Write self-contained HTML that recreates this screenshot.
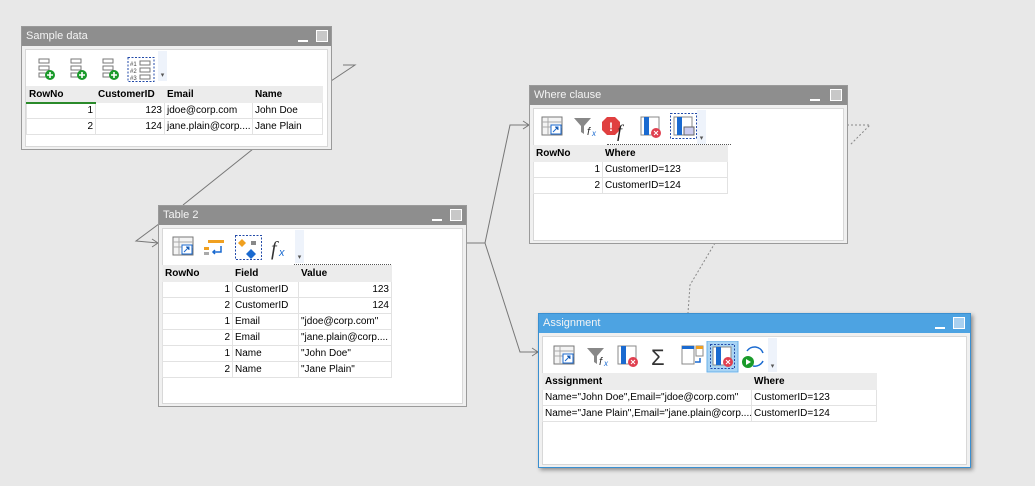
<!DOCTYPE html>
<html><head><style>
*{margin:0;padding:0;box-sizing:border-box}
body{width:1035px;height:486px;background:#e8e8e8;position:relative;overflow:hidden;font-family:"Liberation Sans",sans-serif;font-size:10px;color:#000}
.win{position:absolute;background:#f0f0f0;border:1px solid #9a9a9a}
.tb{height:19px;background:#8e8e8e;color:#f4f4f4;font-size:11px;line-height:19px;padding-left:4px;position:relative}
.tb .mn{position:absolute;top:13px;width:10px;height:2px;background:#fff}
.tb .mx{position:absolute;top:3px;width:12px;height:12px;border:1px solid #fff;background:#c8c8c8}
.body{position:absolute;background:#fff;border:1px solid #d8d8d8}
table{position:absolute;border-collapse:collapse;table-layout:fixed}
td,th{height:16px;border:1px solid #e2e2e2;padding:0 2px;white-space:nowrap;overflow:hidden;font-size:10px}
th{background:#ececec;font-weight:bold;text-align:left;border-color:#ececec}
td.r{text-align:right}
.ic{position:absolute}
.more{position:absolute;width:9px;background:#eef3fb;font-size:7px;color:#555;text-align:center}
</style></head><body>
<svg width="1035" height="486" style="position:absolute;left:0;top:0">
<g stroke="#777" fill="none" stroke-width="1">
<polyline points="331,81 355,65 343,65"/>
<line x1="253" y1="149" x2="183" y2="205"/>
<polyline points="175,212 136,241 158,243"/>
<polyline points="466,243 485,243 510,125 529,125"/>
<polyline points="485,243 520,352 538,352"/>
<path d="M152,239 L158,243 L152,247 M523,121 L529,125 L523,129 M532,348 L538,352 L532,356"/>
</g>
<g stroke="#888" fill="none" stroke-dasharray="2,2">
<polyline points="847,125 870,125 850,145"/>
<polyline points="715,243 690,285 688,313"/>
</g>
</svg>

<!-- Sample data -->
<div class="win" style="left:21px;top:26px;width:311px;height:124px">
<div class="tb">Sample data<span class="mn" style="left:276px"></span><span class="mx" style="left:294px"></span></div>
<div class="body" style="left:3px;top:22px;width:303px;height:98px"></div>
<svg class="ic" style="left:14px;top:30px" width="140" height="26">
<g fill="#fff" stroke="#777"><rect x="3" y="2" width="10" height="4"/><rect x="3" y="9" width="10" height="4"/><rect x="3" y="16" width="10" height="4"/>
<rect x="35" y="2" width="10" height="4"/><rect x="35" y="9" width="10" height="4"/><rect x="35" y="16" width="10" height="4"/>
<rect x="67" y="2" width="10" height="4"/><rect x="67" y="9" width="10" height="4"/><rect x="67" y="16" width="10" height="4"/></g>
<g fill="#1a9a2a"><circle cx="14" cy="18" r="5"/><circle cx="46" cy="18" r="5"/><circle cx="78" cy="18" r="5"/></g>
<g stroke="#fff" stroke-width="1.6"><path d="M11 18h6M14 15v6M43 18h6M46 15v6M75 18h6M78 15v6"/></g>
<rect x="92" y="0.5" width="26" height="24" fill="none" stroke="#224aa8" stroke-dasharray="2,1.5"/>
<text x="94" y="9" font-size="6" fill="#444">#1</text><text x="94" y="16" font-size="6" fill="#444">#2</text><text x="94" y="23" font-size="6" fill="#444">#3</text>
<g fill="#fff" stroke="#777"><rect x="104" y="4" width="10" height="4"/><rect x="104" y="11" width="10" height="4"/><rect x="104" y="18" width="10" height="4"/></g>
</svg>
<div class="more" style="left:136px;top:24px;height:30px;padding-top:20px">▾</div>
<table style="left:4px;top:59px;width:296px">
<colgroup><col style="width:69px"><col style="width:69px"><col style="width:88px"><col style="width:70px"></colgroup>
<tr><th style="border-bottom:2px solid #2a8a2a">RowNo</th><th>CustomerID</th><th>Email</th><th>Name</th></tr>
<tr><td class="r">1</td><td class="r">123</td><td>jdoe@corp.com</td><td>John Doe</td></tr>
<tr><td class="r">2</td><td class="r">124</td><td>jane.plain@corp....</td><td>Jane Plain</td></tr>
</table>
</div>

<!-- Table 2 -->
<div class="win" style="left:158px;top:205px;width:309px;height:202px">
<div class="tb">Table 2<span class="mn" style="left:273px"></span><span class="mx" style="left:291px"></span></div>
<div class="body" style="left:3px;top:22px;width:301px;height:176px"></div>
<svg class="ic" style="left:12px;top:27px" width="140" height="28">
<rect x="2" y="4" width="20" height="18" fill="#f4f4f4" stroke="#777"/><path d="M2 9h20M2 14h20M8 4v18" stroke="#aaa"/><rect x="11" y="12" width="10" height="9" fill="#fff" stroke="#1a6ad0"/><path d="M13 19l5-5M15 14h3v3" stroke="#1a6ad0"/>
<rect x="37" y="7" width="16" height="3" fill="#f0a020"/><rect x="33" y="14" width="5" height="3" fill="#f0a020"/><rect x="33" y="19" width="5" height="3" fill="#aaa"/><path d="M50 13v6h-8M44 17l-2 2 2 2" stroke="#1a6ad0" fill="none" stroke-width="1.5"/>
<rect x="64.5" y="2.5" width="26" height="24" fill="none" stroke="#224aa8" stroke-dasharray="2,1.5"/>
<path d="M71 6l4 4-4 4-4-4z" fill="#f0a020"/><rect x="80" y="8" width="5" height="4" fill="#888"/><path d="M80 16l5 5-5 5-5-5z" fill="#1a6ad0"/>
<text x="100" y="22" font-size="20" font-style="italic" font-family="Liberation Serif" fill="#333">f</text><text x="108" y="23" font-size="11" font-style="italic" fill="#1a6ad0">x</text>
</svg>
<div class="more" style="left:136px;top:24px;height:33px;padding-top:23px">▾</div>
<div style="position:absolute;left:135px;top:58px;width:97px;border-top:1px dotted #555"></div>
<table style="left:3px;top:59px;width:229px">
<colgroup><col style="width:70px"><col style="width:66px"><col style="width:93px"></colgroup>
<tr><th>RowNo</th><th>Field</th><th>Value</th></tr>
<tr><td class="r">1</td><td>CustomerID</td><td class="r">123</td></tr>
<tr><td class="r">2</td><td>CustomerID</td><td class="r">124</td></tr>
<tr><td class="r">1</td><td>Email</td><td>"jdoe@corp.com"</td></tr>
<tr><td class="r">2</td><td>Email</td><td>"jane.plain@corp....</td></tr>
<tr><td class="r">1</td><td>Name</td><td>"John Doe"</td></tr>
<tr><td class="r">2</td><td>Name</td><td>"Jane Plain"</td></tr>
</table>
</div>

<!-- Where clause -->
<div class="win" style="left:529px;top:85px;width:319px;height:159px">
<div class="tb">Where clause<span class="mn" style="left:280px"></span><span class="mx" style="left:300px"></span></div>
<div class="body" style="left:3px;top:22px;width:311px;height:133px"></div>
<svg class="ic" style="left:10px;top:27px" width="175" height="28">
<rect x="2" y="4" width="20" height="18" fill="#f4f4f4" stroke="#777"/><path d="M2 9h20M2 14h20M8 4v18" stroke="#aaa"/><rect x="11" y="12" width="10" height="9" fill="#fff" stroke="#1a6ad0"/><path d="M13 19l5-5M15 14h3v3" stroke="#1a6ad0"/>
<path d="M34 5h17l-7 8v8l-3-2v-6z" fill="#888"/><text x="47" y="22" font-size="11" font-style="italic" fill="#333">f</text><text x="52" y="23" font-size="8" font-style="italic" fill="#1a6ad0">x</text>
<path d="M67 4h8l5 5v8l-5 5h-8l-5-5v-8z" fill="#e04040"/><text x="69" y="18" font-size="12" font-weight="bold" fill="#fff">!</text><text x="77" y="24" font-size="18" font-style="italic" font-family="Liberation Serif" fill="#222">f</text>
<rect x="101" y="4" width="18" height="18" fill="#fff" stroke="#888"/><rect x="104" y="4" width="5" height="18" fill="#1a6ad0"/><circle cx="116" cy="20" r="5" fill="#e04050"/><path d="M114 18l4 4M118 18l-4 4" stroke="#fff"/>
<rect x="130.5" y="0.5" width="26" height="25" fill="none" stroke="#224aa8" stroke-dasharray="2,1.5"/><rect x="134" y="4" width="18" height="18" fill="#fff" stroke="#888"/><rect x="137" y="4" width="5" height="18" fill="#1a6ad0"/><rect x="144" y="14" width="10" height="8" fill="#cce" stroke="#666"/>
</svg>
<div class="more" style="left:167px;top:24px;height:34px;padding-top:24px">▾</div>
<div style="position:absolute;left:77px;top:58px;width:124px;border-top:1px dotted #555"></div>
<table style="left:3px;top:59px;width:194px">
<colgroup><col style="width:69px"><col style="width:125px"></colgroup>
<tr><th>RowNo</th><th>Where</th></tr>
<tr><td class="r">1</td><td>CustomerID=123</td></tr>
<tr><td class="r">2</td><td>CustomerID=124</td></tr>
</table>
</div>

<!-- Assignment -->
<div class="win" style="left:538px;top:313px;width:433px;height:155px;box-shadow:2px 2px 4px rgba(0,0,0,.4);border-color:#3a8fd0">
<div class="tb" style="background:#4da3e2">Assignment<span class="mn" style="left:396px"></span><span class="mx" style="left:414px;background:#a8d0f0"></span></div>
<div class="body" style="left:3px;top:22px;width:425px;height:129px"></div>
<svg class="ic" style="left:8px;top:27px" width="240" height="32">
<rect x="7" y="5" width="20" height="18" fill="#f4f4f4" stroke="#777"/><path d="M7 10h20M7 15h20M13 5v18" stroke="#aaa"/><rect x="16" y="13" width="10" height="9" fill="#fff" stroke="#1a6ad0"/><path d="M18 20l5-5M20 15h3v3" stroke="#1a6ad0"/>
<path d="M40 7h17l-7 8v8l-3-2v-6z" fill="#888"/><text x="52" y="24" font-size="11" font-style="italic" fill="#333">f</text><text x="57" y="25" font-size="8" font-style="italic" fill="#1a6ad0">x</text>
<rect x="71" y="5" width="18" height="18" fill="#fff" stroke="#888"/><rect x="74" y="5" width="5" height="18" fill="#1a6ad0"/><circle cx="86" cy="21" r="5" fill="#e04050"/><path d="M84 19l4 4M88 19l-4 4" stroke="#fff"/>
<text x="104" y="24" font-size="22" fill="#333">Σ</text>
<rect x="135" y="5" width="12" height="18" fill="#fff" stroke="#888"/><rect x="135" y="5" width="12" height="3" fill="#1a6ad0"/><rect x="149" y="5" width="7" height="10" fill="#fff" stroke="#888"/><rect x="149" y="5" width="7" height="3" fill="#f0a020"/><path d="M153 17v4h-5" stroke="#1a6ad0" fill="none" stroke-width="1.5"/>
<rect x="160" y="0" width="31" height="31" fill="#a8d4f4" stroke="#6ab0e8"/><rect x="163.5" y="3.5" width="24" height="24" fill="none" stroke="#224aa8" stroke-dasharray="2,1.5"/><rect x="166" y="6" width="18" height="18" fill="#fff" stroke="#888"/><rect x="169" y="6" width="5" height="18" fill="#1a6ad0"/><circle cx="181" cy="21" r="5" fill="#e04050"/><path d="M179 19l4 4M183 19l-4 4" stroke="#fff"/>
<path d="M200 10a9 9 0 0 1 16 2M216 20a9 9 0 0 1-10 5" stroke="#1a6ad0" fill="none" stroke-width="1.5"/><circle cx="201" cy="21" r="6" fill="#1a9a2a"/><path d="M199 18v6l5-3z" fill="#fff"/>
</svg>
<div class="more" style="left:229px;top:24px;height:34px;padding-top:24px">▾</div>
<table style="left:3px;top:59px;width:334px">
<colgroup><col style="width:209px"><col style="width:125px"></colgroup>
<tr><th>Assignment</th><th>Where</th></tr>
<tr><td>Name="John Doe",Email="jdoe@corp.com"</td><td>CustomerID=123</td></tr>
<tr><td>Name="Jane Plain",Email="jane.plain@corp....</td><td>CustomerID=124</td></tr>
</table>
</div>
</body></html>
